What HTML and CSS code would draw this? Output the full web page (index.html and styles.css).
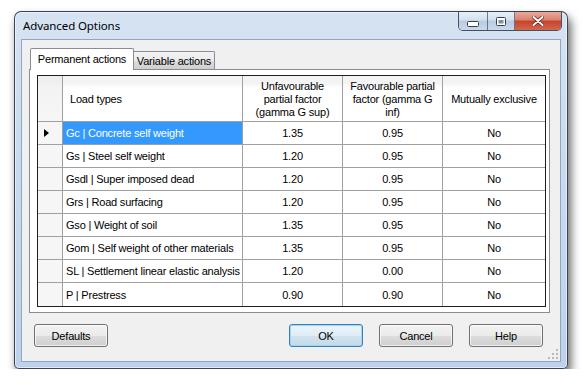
FILE: index.html
```html
<!DOCTYPE html>
<html>
<head>
<meta charset="utf-8">
<link rel="stylesheet" href="styles.css">
</head>
<body>
<div class="window">
  <div class="titlebar">
    <span class="title">Advanced Options</span>
    <div class="caption">
      <div class="cb cb-min">
        <svg width="12" height="6" viewBox="0 0 12 6"><rect x="0.5" y="0.5" width="11" height="5" rx="1" fill="#fff" stroke="#35404f"/></svg>
      </div>
      <div class="cb cb-max">
        <svg width="10" height="9" viewBox="0 0 10 9"><rect x="0.5" y="0.5" width="9" height="8" rx="1" fill="#fff" stroke="#35404f"/><rect x="2.5" y="3" width="5" height="3.5" fill="#7d8ea6"/></svg>
      </div>
      <div class="cb cb-close">
        <svg width="12" height="10" viewBox="0 0 12 10"><path d="M1.5 1 L10.5 9 M10.5 1 L1.5 9" stroke="#5a1d14" stroke-width="3.4" stroke-linecap="round"/><path d="M1.5 1 L10.5 9 M10.5 1 L1.5 9" stroke="#fff" stroke-width="2" stroke-linecap="round"/></svg>
      </div>
    </div>
  </div>
  <div class="client">
    <div class="tabcontrol">
      <div class="tabstrip">
        <div class="tab tab-active">Permanent actions</div>
        <div class="tab tab-inactive">Variable actions</div>
      </div>
      <div class="tabpage">
        <div class="grid">
          <div class="c rh hdr"></div>
          <div class="c hdr hdr-left">Load types</div>
          <div class="c hdr">Unfavourable<br>partial factor<br>(gamma G sup)</div>
          <div class="c hdr">Favourable partial<br>factor (gamma G<br>inf)</div>
          <div class="c hdr last">Mutually exclusive</div>

          <div class="c rh"><span class="arrow"></span></div>
          <div class="c name sel">Gc | Concrete self weight</div>
          <div class="c num">1.35</div><div class="c num">0.95</div><div class="c num last">No</div>

          <div class="c rh"></div>
          <div class="c name">Gs | Steel self weight</div>
          <div class="c num">1.20</div><div class="c num">0.95</div><div class="c num last">No</div>

          <div class="c rh"></div>
          <div class="c name">Gsdl | Super imposed dead</div>
          <div class="c num">1.20</div><div class="c num">0.95</div><div class="c num last">No</div>

          <div class="c rh"></div>
          <div class="c name">Grs | Road surfacing</div>
          <div class="c num">1.20</div><div class="c num">0.95</div><div class="c num last">No</div>

          <div class="c rh"></div>
          <div class="c name">Gso | Weight of soil</div>
          <div class="c num">1.35</div><div class="c num">0.95</div><div class="c num last">No</div>

          <div class="c rh"></div>
          <div class="c name">Gom | Self weight of other materials</div>
          <div class="c num">1.35</div><div class="c num">0.95</div><div class="c num last">No</div>

          <div class="c rh"></div>
          <div class="c name">SL | Settlement linear elastic analysis</div>
          <div class="c num">1.20</div><div class="c num">0.00</div><div class="c num last">No</div>

          <div class="c rh bottom"></div>
          <div class="c name bottom">P | Prestress</div>
          <div class="c num bottom">0.90</div><div class="c num bottom">0.90</div><div class="c num last bottom">No</div>
        </div>
      </div>
    </div>
    <div class="buttons">
      <button class="btn">Defaults</button>
      <button class="btn btn-default push">OK</button>
      <button class="btn">Cancel</button>
      <button class="btn">Help</button>
    </div>
    <svg class="grip" width="10" height="10" viewBox="0 0 10 10" fill="#b8b8b8">
      <rect x="8" y="0" width="2" height="2"/>
      <rect x="4" y="4" width="2" height="2"/><rect x="8" y="4" width="2" height="2"/>
      <rect x="0" y="8" width="2" height="2"/><rect x="4" y="8" width="2" height="2"/><rect x="8" y="8" width="2" height="2"/>
    </svg>
  </div>
</div>
</body>
</html>
```
FILE: styles.css
```css
* { box-sizing: border-box; }
html, body { margin: 0; padding: 0; background: #fff; }
body {
  padding: 11px 0 0 14px;
  font-family: "Liberation Sans", Arial, sans-serif;
  font-size: 11px;
  letter-spacing: -0.2px;
  color: #000;
}
.window {
  width: 554px;
  height: 358px;
  border: 1px solid rgba(30, 40, 55, 0.85);
  border-radius: 7px 7px 5px 5px;
  background: linear-gradient(to bottom, #d6e3f2 0%, #c9dbef 40%, #bdd2ea 100%);
  box-shadow: inset 0 0 0 1px rgba(255,255,255,0.55), 3px 6px 10px rgba(0,0,0,0.6);
  padding: 0 6px 6px 6px;
  display: flex;
  flex-direction: column;
}
.titlebar {
  height: 27px;
  display: flex;
  justify-content: space-between;
  align-items: flex-start;
}
.title {
  font-family: "Noto Sans", "Open Sans", sans-serif;
  font-size: 11.5px;
  color: #000;
  margin: 6px 0 0 2px;
  letter-spacing: -0.1px;
}
.caption {
  display: flex;
  height: 19px;
  border: 1px solid rgba(45, 55, 75, 0.85);
  border-top: none;
  border-radius: 0 0 5px 5px;
  overflow: hidden;
  margin-right: -1px;
}
.cb {
  display: flex;
  align-items: center;
  justify-content: center;
  height: 100%;
}
.cb-min, .cb-max {
  background: linear-gradient(to bottom, #e7eef7 0%, #d4e0ef 45%, #b9cbe2 50%, #c9d8ea 100%);
  border-right: 1px solid rgba(60, 75, 100, 0.7);
}
.cb-min { width: 29px; padding-top: 5px; }
.cb-max { width: 27px; }
.cb-close {
  width: 46px;
  background: linear-gradient(to bottom, #e9a99c 0%, #d9806d 45%, #c6432b 50%, #d3674f 100%);
}
.client {
  flex: 1;
  border: 1px solid #93a6bf;
  background: #f0f0f0;
  padding: 8px 0 0 7px;
  display: flex;
  flex-direction: column;
  position: relative;
}
.tabcontrol {
  width: 521px;
  display: flex;
  flex-direction: column;
}
.tabstrip {
  display: flex;
  align-items: flex-end;
  height: 22px;
  margin-bottom: -1px;
  padding-left: 1px;
  position: relative;
  z-index: 1;
}
.tab {
  border: 1px solid #898c95;
  border-bottom: none;
  text-align: center;
  white-space: nowrap;
}
.tab-active {
  width: 104px;
  height: 22px;
  background: #fff;
  padding-top: 4px;
  border-radius: 2px 2px 0 0;
}
.tab-inactive {
  width: 81px;
  height: 18px;
  margin-bottom: 1px;
  border-left: none;
  background: linear-gradient(to bottom, #f3f3f3 0%, #ebebeb 50%, #dddddd 51%, #cfcfcf 100%);
  padding-top: 3px;
  border-radius: 0 2px 0 0;
}
.tabpage {
  height: 244px;
  border: 1px solid #898c95;
  background: #fff;
  padding: 5px 3px 5px 7px;
}
.grid {
  display: grid;
  grid-template-columns: 25px 180px 100px 100px 102px;
  grid-template-rows: 46px repeat(8, 23px);
  border: 1px solid #1e1e1e;
  width: 509px;
  height: 232px;
  background: #fff;
}
.c {
  border-right: 1px solid #a0a0a0;
  border-bottom: 1px solid #a0a0a0;
  display: flex;
  align-items: center;
  white-space: nowrap;
  overflow: hidden;
}
.c.last { border-right: none; }
.c.bottom { border-bottom: none; }
.hdr {
  background: linear-gradient(to bottom, #f3f3f3 0px, #f3f3f3 7px, #ffffff 12px, #ffffff 100%);
  justify-content: center;
  text-align: center;
  line-height: 13px;
  padding-top: 1px;
}
.hdr-left { justify-content: flex-start; padding-left: 7px; text-align: left; }
.rh { background: #f6f6f6; padding-left: 6px; }
.rh.hdr { background: linear-gradient(to bottom, #ececec 0px, #f3f3f3 12px, #f6f6f6 100%); }
.arrow {
  width: 0; height: 0;
  border-left: 5px solid #000;
  border-top: 4.5px solid transparent;
  border-bottom: 4.5px solid transparent;
}
.name { padding-left: 3px; }
.num { justify-content: center; }
.sel {
  background: #3399ff;
  color: #fff;
  box-shadow: inset 0 0 0 1px #3399ff;
}
.buttons {
  display: flex;
  margin-top: 11px;
  padding: 0 17px 0 5px;
  gap: 16px;
}
.push { margin-left: auto; }
.btn {
  width: 74px;
  height: 23px;
  font-family: "Liberation Sans", Arial, sans-serif;
  font-size: 11px;
  letter-spacing: -0.2px;
  color: #000;
  border: 1px solid #707070;
  border-radius: 3px;
  background: linear-gradient(to bottom, #f2f2f2 0%, #ebebeb 50%, #dddddd 51%, #cfcfcf 100%);
  box-shadow: inset 0 0 0 1px rgba(255,255,255,0.7);
  padding: 0;
}
.btn-default {
  border-color: #3c7fb1;
  box-shadow: inset 0 0 0 1px #9fd6f5;
  background: linear-gradient(to bottom, #eaf4fa 0%, #e0edf6 50%, #d2e3ef 51%, #c4d9e8 100%);
}
.grip {
  position: absolute;
  right: 2px;
  bottom: 2px;
}
```
